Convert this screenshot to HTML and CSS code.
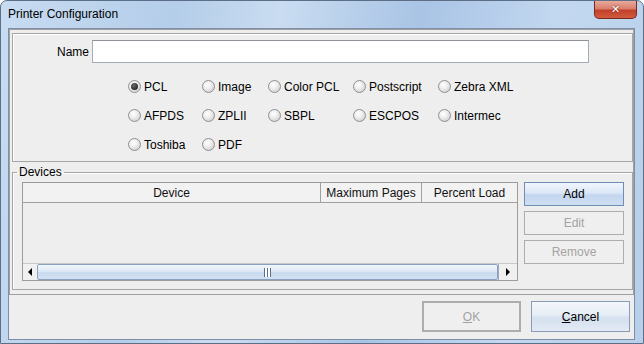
FILE: index.html
```html
<!DOCTYPE html>
<html>
<head>
  <title>Printer Configuration</title>
  <link rel="stylesheet" href="styles.css">
</head>
<body>
<div class="window">
  <div class="titlebar">
    <span class="title">Printer Configuration</span>
    <div class="close-btn">&#x2715;</div>
  </div>
  <div class="client">
    <div class="main-panel">
      <div class="settings">
        <div class="name-row">
          <label class="name-label" for="name">Name</label>
          <input class="text-field" type="text" id="name">
        </div>
        <div class="radio-grid">
          <label class="radio"><span class="radio-dot checked"></span>PCL</label>
          <label class="radio"><span class="radio-dot"></span>Image</label>
          <label class="radio"><span class="radio-dot"></span>Color PCL</label>
          <label class="radio"><span class="radio-dot"></span>Postscript</label>
          <label class="radio"><span class="radio-dot"></span>Zebra XML</label>
          <label class="radio"><span class="radio-dot"></span>AFPDS</label>
          <label class="radio"><span class="radio-dot"></span>ZPLII</label>
          <label class="radio"><span class="radio-dot"></span>SBPL</label>
          <label class="radio"><span class="radio-dot"></span>ESCPOS</label>
          <label class="radio"><span class="radio-dot"></span>Intermec</label>
          <label class="radio"><span class="radio-dot"></span>Toshiba</label>
          <label class="radio"><span class="radio-dot"></span>PDF</label>
        </div>
      </div>
      <fieldset class="devices">
        <legend>Devices</legend>
        <div class="devices-body">
          <div class="table-pane">
            <div class="table-header">
              <div class="col col-device">Device</div>
              <div class="col col-pages">Maximum Pages</div>
              <div class="col col-load">Percent Load</div>
            </div>
            <div class="table-rows"></div>
            <div class="hscroll">
              <div class="scroll-arrow left"><span class="tri-left"></span></div>
              <div class="scroll-thumb"><span class="grip"></span></div>
              <div class="scroll-arrow right"><span class="tri-right"></span></div>
            </div>
          </div>
          <div class="side-buttons">
            <button class="btn btn-default">Add</button>
            <button class="btn" disabled>Edit</button>
            <button class="btn" disabled>Remove</button>
          </div>
        </div>
      </fieldset>
    </div>
    <div class="footer">
      <button class="btn footer-btn" disabled><u>O</u>K</button>
      <button class="btn footer-btn btn-cancel"><u>C</u>ancel</button>
    </div>
  </div>
</div>
</body>
</html>
```

FILE: styles.css
```css
html, body {
  margin: 0;
  padding: 0;
}

body {
  width: 644px;
  height: 344px;
  overflow: hidden;
  font-family: "Liberation Sans", Arial, sans-serif;
  font-size: 12px;
  color: #000;
  background: #fff;
}

.window {
  width: 644px;
  height: 344px;
  box-sizing: border-box;
  display: flex;
  flex-direction: column;
  border: 1px solid #5d6f87;
  border-radius: 7px 7px 0 0;
  background: linear-gradient(100deg, #c8dcf2 0%, #b4cde9 25%, #c9dcf1 40%, #a9c4e5 60%, #c3d8f0 80%, #b7cfea 100%);
}

.titlebar {
  height: 27px;
  display: flex;
  align-items: flex-start;
}

.title {
  margin: 6px 0 0 7px;
  font-size: 12px;
  color: #000;
}

.close-btn {
  margin-left: auto;
  margin-right: 6px;
  width: 43px;
  height: 18px;
  box-sizing: border-box;
  border: 1px solid #7a2a1f;
  border-top: none;
  border-radius: 0 0 5px 5px;
  background: linear-gradient(to bottom, #e9a99b 0%, #d9806c 45%, #c2412a 55%, #d05a3e 100%);
  color: #fff;
  font-family: "DejaVu Sans", sans-serif;
  font-weight: bold;
  font-size: 11px;
  text-align: center;
  line-height: 17px;
  text-shadow: 0 0 2px #5a1a10;
}

.client {
  flex: 1;
  margin: 0 8px 3px 7px;
  background: #eeeeee;
  border: 1px solid #7d8fa6;
  display: flex;
  flex-direction: column;
}

.main-panel {
  height: 266px;
  box-sizing: border-box;
  border: 1px solid #a0a0a0;
  padding: 3px 0 4px 2px;
  display: flex;
  flex-direction: column;
}

.settings {
  height: 130px;
  box-sizing: border-box;
  border: 1px solid #a6a6a6;
  box-shadow: inset 1px 1px 0 #fff;
  padding-top: 6px;
}

.name-row {
  display: flex;
  align-items: center;
}

.name-label {
  width: 76px;
  text-align: right;
  margin-right: 3px;
}

.text-field {
  width: 497px;
  height: 23px;
  box-sizing: border-box;
  border: 1px solid #a5acb5;
  border-top-color: #8c9298;
  background: #fff;
  margin: 0;
  padding: 0 3px;
  font: inherit;
  outline: none;
}

.radio-grid {
  display: grid;
  grid-template-columns: 74px 66px 85px 85px auto;
  grid-auto-rows: 29px;
  margin-top: 9px;
  padding-left: 115px;
}

.radio {
  display: flex;
  align-items: center;
  gap: 3px;
  height: 29px;
}

.radio-dot {
  width: 13px;
  height: 13px;
  box-sizing: border-box;
  border-radius: 50%;
  border: 1px solid #8f9091;
  background: radial-gradient(circle at 40% 35%, #ffffff 0%, #f0f0f0 35%, #d6d6d6 75%, #c9c9c9 100%);
  position: relative;
}

.radio-dot.checked::after {
  content: "";
  position: absolute;
  left: 2px;
  top: 2px;
  width: 7px;
  height: 7px;
  border-radius: 50%;
  background: radial-gradient(circle at 40% 35%, #6a6a6a 0%, #2a2a2a 70%, #1a1a1a 100%);
}

.devices {
  margin: 3px 0 0 0;
  padding: 0;
  min-width: 0;
  flex: 1;
  border: 1px solid #a6a6a6;
  box-shadow: inset 1px 1px 0 #fff;
}

.devices legend {
  margin-left: 4px;
  padding: 0 2px;
  line-height: 14px;
}

.devices-body {
  display: flex;
  gap: 6px;
  padding: 3px 8px 8px 9px;
}

.table-pane {
  width: 496px;
  height: 99px;
  box-sizing: border-box;
  border: 1px solid #9c9c9c;
  background: #eeeeee;
  display: flex;
  flex-direction: column;
}

.table-header {
  display: flex;
  height: 20px;
  box-sizing: border-box;
  border-bottom: 1px solid #a0a0a0;
  background: #f2f2f2;
}

.col {
  display: flex;
  align-items: center;
  justify-content: center;
  box-sizing: border-box;
  color: #111;
}

.col-device {
  width: 298px;
  border-right: 1px solid #a0a0a0;
}

.col-pages {
  width: 101px;
  border-right: 1px solid #a0a0a0;
}

.col-load {
  flex: 1;
}

.table-rows {
  flex: 1;
}

.hscroll {
  height: 16px;
  display: flex;
  border-top: 1px solid #c8c8c8;
  background: #f0f0f0;
}

.scroll-arrow {
  display: flex;
  align-items: center;
  justify-content: center;
}

.scroll-arrow.left {
  width: 14px;
}

.scroll-arrow.right {
  width: 18px;
  border-left: 1px solid #9aa7b8;
}

.tri-left {
  width: 0;
  height: 0;
  border-top: 4px solid transparent;
  border-bottom: 4px solid transparent;
  border-right: 4px solid #000;
}

.tri-right {
  width: 0;
  height: 0;
  border-top: 4px solid transparent;
  border-bottom: 4px solid transparent;
  border-left: 4px solid #000;
}

.scroll-thumb {
  flex: 1;
  box-sizing: border-box;
  border: 1px solid #8aa0bf;
  border-radius: 2px;
  background: linear-gradient(to bottom, #f3f7fd 0%, #dde8f6 45%, #c9daf0 55%, #d3e1f3 100%);
  display: flex;
  align-items: center;
  justify-content: center;
}

.grip {
  width: 7px;
  height: 9px;
  background: repeating-linear-gradient(to right, #5a6f8e 0px, #5a6f8e 1px, #ffffff 1px, #ffffff 3px);
}

.side-buttons {
  display: flex;
  flex-direction: column;
  gap: 5px;
}

.btn {
  width: 100px;
  height: 24px;
  box-sizing: border-box;
  margin: 0;
  padding: 0;
  font: inherit;
  color: #000;
  border: 1px solid #7a8ea8;
  border-radius: 0;
  background: linear-gradient(to bottom, #f4f7fb 0%, #e6edf6 45%, #d4e0ef 55%, #e2eaf5 100%);
}

.btn-default {
  border-color: #6f8cb3;
  background: linear-gradient(to bottom, #f1f6fd 0%, #dbe7f6 45%, #c3d6ee 55%, #cfdff2 100%);
}

.btn:disabled {
  color: #a3a3a3;
  border-color: #adadad;
  background: #efefef;
}

.footer {
  flex: 1;
  display: flex;
  justify-content: flex-end;
  align-items: flex-start;
  gap: 10px;
  padding: 6px 4px 0 0;
}

.footer-btn {
  width: 99px;
  height: 31px;
}

.footer-btn:disabled {
  border: 2px solid #adadad;
}

.btn-cancel {
  border-color: #8a9cb4;
}
```
